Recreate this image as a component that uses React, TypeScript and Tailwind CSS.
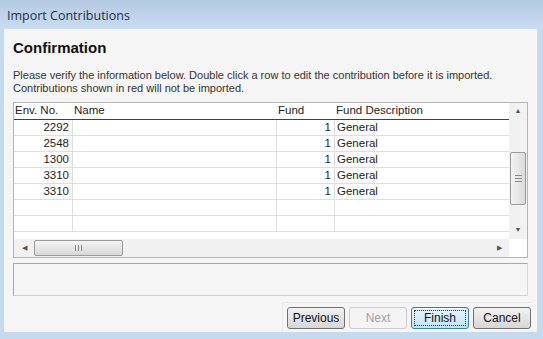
import { ReactNode } from 'react';

const rows = [
  { env: '2292', name: '', fund: '1', desc: 'General' },
  { env: '2548', name: '', fund: '1', desc: 'General' },
  { env: '1300', name: '', fund: '1', desc: 'General' },
  { env: '3310', name: '', fund: '1', desc: 'General' },
  { env: '3310', name: '', fund: '1', desc: 'General' },
  { env: '', name: '', fund: '', desc: '' },
  { env: '', name: '', fund: '', desc: '' },
];

const Btn = ({ children, disabled, focused }: { children: ReactNode; disabled?: boolean; focused?: boolean }) => {
  if (disabled)
    return (
      <div className="w-[58px] h-[22px] flex items-center justify-center rounded-[3px] border border-[#c9cdd1] bg-[#f4f4f4] text-[#a3a3a3]">
        {children}
      </div>
    );
  if (focused)
    return (
      <div className="w-[58px] h-[22px] p-[2px] rounded-[3px] border border-[#3c7fb1] bg-gradient-to-b from-[#eaf6fd] to-[#bfe3f8]">
        <div className="w-full h-full flex items-center justify-center border border-dotted border-[#333] text-[#111]">
          {children}
        </div>
      </div>
    );
  return (
    <div className="w-[58px] h-[22px] flex items-center justify-center rounded-[3px] border border-[#707070] bg-gradient-to-b from-[#f2f2f2] to-[#d6d6d6] text-[#111]">
      {children}
    </div>
  );
};

export default function App() {
  return (
    <div
      className="w-[543px] h-[339px] flex flex-col bg-[#c6daef] overflow-hidden text-[11px]"
      style={{ fontFamily: '"Liberation Sans", Arial, sans-serif' }}
    >
      <div className="h-[29px] shrink-0 flex items-center pl-[7px] pt-[4px] bg-gradient-to-b from-[#b3cae3] to-[#c9dcf0] text-[#1d2f44] text-[12.5px]"
        style={{ fontFamily: '"Open Sans", "Liberation Sans", sans-serif' }}>
        Import Contributions
      </div>
      <div className="flex-1 flex pl-[4px] pr-[6px] pb-[7px]">
        <div className="flex-1 bg-[#f5f5f5] flex flex-col pl-[9px] pr-[9px]">
          <div className="pt-[8px] h-[33px] text-[15px] font-bold text-[#111]">Confirmation</div>
          <div className="mt-[7px] text-[#333] leading-[13px] text-[11px]">
            <div>Please verify the information below. Double click a row to edit the contribution before it is imported.</div>
            <div>Contributions shown in red will not be imported.</div>
          </div>

          {/* grid */}
          <div className="mt-[7px] h-[156px] w-[515px] border border-[#b5b5b5] bg-white flex flex-col text-[11.5px] text-[#222]">
            <div className="flex h-[136px]">
              <div className="flex-1 flex flex-col overflow-hidden">
                <div className="flex h-[17px] border-b border-[#404040] items-center shrink-0">
                  <div className="w-[59px] pl-[1px]">Env. No.</div>
                  <div className="w-[204px] pl-[1px]">Name</div>
                  <div className="w-[58px] pl-[1px]">Fund</div>
                  <div className="flex-1 pl-[1px]">Fund Description</div>
                </div>
                {rows.map((r, i) => (
                  <div key={i} className="flex h-[16px] border-b border-[#dedede] shrink-0">
                    <div className="w-[59px] pr-[3px] text-right border-r border-[#dedede] leading-[15px]">{r.env}</div>
                    <div className="w-[204px] border-r border-[#dedede]">{r.name}</div>
                    <div className="w-[58px] pr-[3px] text-right border-r border-[#dedede] leading-[15px]">{r.fund}</div>
                    <div className="flex-1 pl-[2px] leading-[15px]">{r.desc}</div>
                  </div>
                ))}
              </div>
              {/* vertical scrollbar */}
              <div className="w-[18px] bg-[#f1f1f1] flex flex-col items-center">
                <div className="h-[17px] flex items-center justify-center text-[#555] text-[7px]">▲</div>
                <div className="h-[32px]" />
                <div className="w-[16px] h-[53px] rounded-[2px] border border-[#9a9a9a] bg-gradient-to-r from-[#f4f4f4] to-[#dadada] flex items-center justify-center">
                  <div className="flex flex-col gap-[2px]">
                    <div className="w-[7px] h-[1px] bg-[#888]" />
                    <div className="w-[7px] h-[1px] bg-[#888]" />
                    <div className="w-[7px] h-[1px] bg-[#888]" />
                  </div>
                </div>
                <div className="flex-1" />
                <div className="h-[17px] flex items-center justify-center text-[#555] text-[7px]">▼</div>
              </div>
            </div>
            {/* horizontal scrollbar */}
            <div className="flex h-[18px]">
              <div className="flex-1 bg-[#f1f1f1] flex items-center">
                <div className="w-[20px] flex items-center justify-center text-[#555] text-[7px]">◀</div>
                <div className="w-[89px] h-[16px] rounded-[2px] border border-[#9a9a9a] bg-gradient-to-b from-[#f4f4f4] to-[#d8d8d8] flex items-center justify-center gap-[2px]">
                  <div className="w-[1px] h-[6px] bg-[#888]" />
                  <div className="w-[1px] h-[6px] bg-[#888]" />
                  <div className="w-[1px] h-[6px] bg-[#888]" />
                </div>
                <div className="flex-1" />
                <div className="w-[20px] flex items-center justify-center text-[#555] text-[7px]">▶</div>
              </div>
              <div className="w-[18px] bg-white" />
            </div>
          </div>

          <div className="mt-[5px] h-[33px] w-[515px] border border-[#a8a8a8] border-r-[#d8d8d8] border-b-[#d0d0d0] bg-[#f5f5f5]" />

          <div className="mt-[6px] flex justify-end">
            <div className="flex gap-[4px] pl-[4px] pt-[4px] pr-[2px] pb-[3px] border-t border-l border-[#e9e9e9] text-[12px] -mr-[5px]">
              <Btn>Previous</Btn>
              <Btn disabled>Next</Btn>
              <Btn focused>Finish</Btn>
              <Btn>Cancel</Btn>
            </div>
          </div>
        </div>
      </div>
    </div>
  );
}
